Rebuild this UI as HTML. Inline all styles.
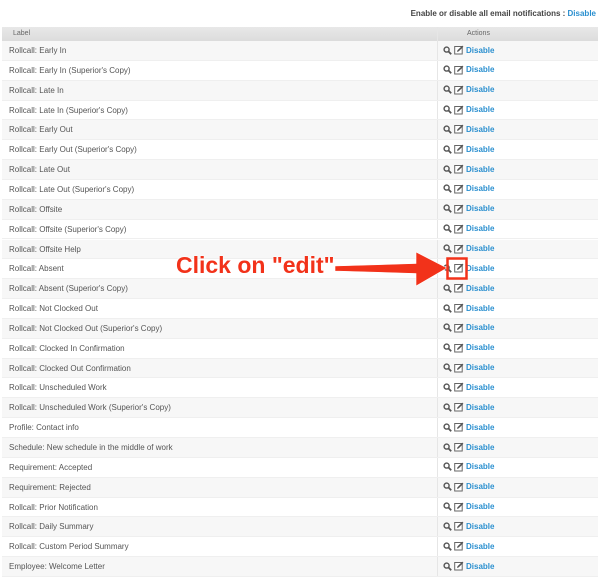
<!DOCTYPE html><html><head><style>
body{margin:0;width:600px;height:577px;background:#fff;font-family:"Liberation Sans",sans-serif;position:relative;overflow:hidden}
.top{position:absolute;right:4px;top:9px;font-size:8px;font-weight:bold;color:#444}
.top b{color:#2a8fcf}
.hdr{position:absolute;left:2px;top:27px;width:596px;height:14px;background:linear-gradient(#e8e8e8,#dcdcdc);font-size:7px;color:#666}
.row{position:absolute;left:2px;width:596px;height:19.85px;border-bottom:1px solid #efefef;box-sizing:border-box;font-size:8px;color:#555}
.c1{position:absolute;left:7px;top:5px}
.div{position:absolute;left:435px;top:0;bottom:0;border-left:1px solid #e6e6e6}
.c2{position:absolute;left:441px;top:4px;display:flex;align-items:center;gap:2px;font-weight:bold;color:#2a8fcf;font-size:8px}
</style></head><body>
<div class="top">Enable or disable all email notifications : <b>Disable</b></div>
<div class="hdr"><span style="position:absolute;left:11px;top:3px">Label</span><span style="position:absolute;left:465px;top:3px">Actions</span><div class="div"></div></div>
<div id="rows"></div>
<script>
var L=["Rollcall: Early In","Rollcall: Early In (Superior's Copy)","Rollcall: Late In","Rollcall: Late In (Superior's Copy)","Rollcall: Early Out","Rollcall: Early Out (Superior's Copy)","Rollcall: Late Out","Rollcall: Late Out (Superior's Copy)","Rollcall: Offsite","Rollcall: Offsite (Superior's Copy)","Rollcall: Offsite Help","Rollcall: Absent","Rollcall: Absent (Superior's Copy)","Rollcall: Not Clocked Out","Rollcall: Not Clocked Out (Superior's Copy)","Rollcall: Clocked In Confirmation","Rollcall: Clocked Out Confirmation","Rollcall: Unscheduled Work","Rollcall: Unscheduled Work (Superior's Copy)","Profile: Contact info","Schedule: New schedule in the middle of work","Requirement: Accepted","Requirement: Rejected","Rollcall: Prior Notification","Rollcall: Daily Summary","Rollcall: Custom Period Summary","Employee: Welcome Letter"];
var h="";var ic='<svg width="9" height="9" viewBox="0 0 9 9"><circle cx="3.6" cy="3.6" r="2.5" fill="none" stroke="#555" stroke-width="1.4"/><path d="M5.4 5.4L8.2 8.2" stroke="#555" stroke-width="1.8"/></svg><svg width="10" height="10" viewBox="0 0 10 10"><rect x="0.7" y="1.5" width="7.5" height="7.5" fill="#fff" stroke="#666" stroke-width="1"/><path d="M3 7L3.5 5.3L8.3 0.6L9.4 1.7L4.7 6.4Z" fill="#555"/></svg>';
for(var i=0;i<L.length;i++){h+='<div class="row" style="top:'+(41+i*19.85)+'px;background:'+(i%2?'#fff':'#f7f7f7')+'"><span class="c1">'+L[i]+'</span><div class="div"></div><span class="c2">'+ic+'<span>Disable</span></span></div>';}
document.getElementById('rows').innerHTML=h;
</script>
<svg style="position:absolute;left:0;top:0" width="600" height="577">
<path d="M335 266L416 263.5L416 252L447 268L416 286L416 273.5L335 271Z" fill="#f2321a" stroke="#fff" stroke-width="0.6"/>
<rect x="447.5" y="258.5" width="19" height="20" fill="none" stroke="#f2321a" stroke-width="2.5"/>
</svg>
<div style="position:absolute;left:176px;top:252px;font-size:23px;font-weight:bold;color:#f2321a;text-shadow:0 0 2px #fff,0 0 2px #fff">Click on "edit"</div>
</body></html>
